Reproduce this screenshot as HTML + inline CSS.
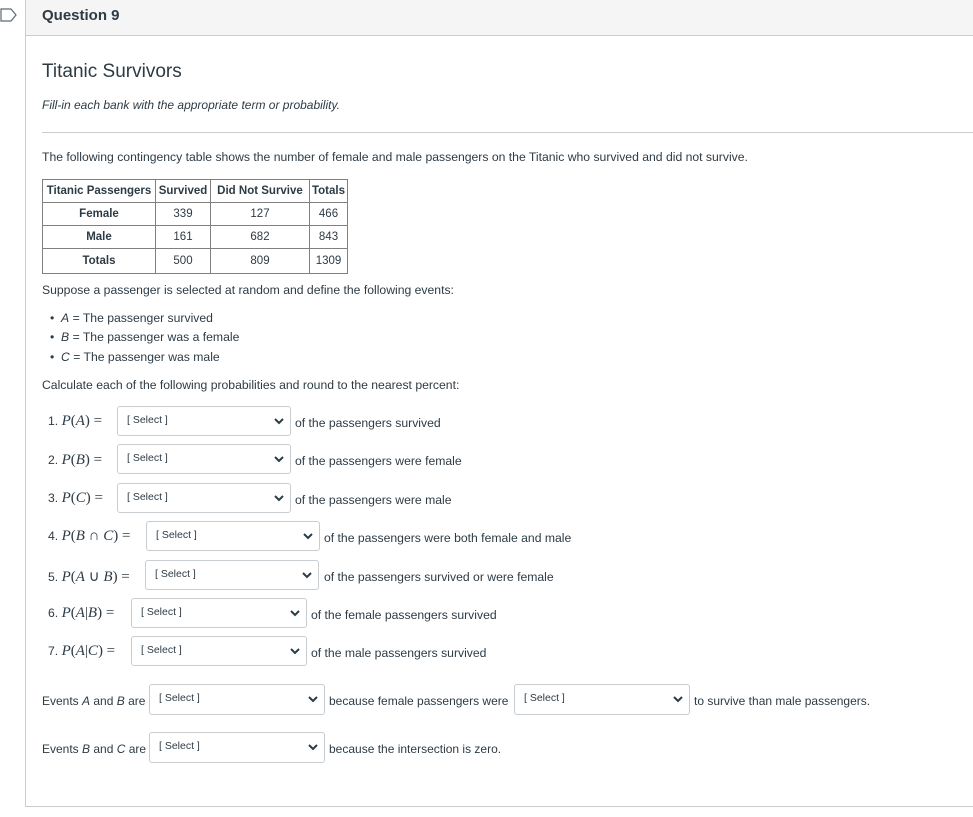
<!DOCTYPE html>
<html><head><meta charset="utf-8"><style>
*{margin:0;padding:0;box-sizing:border-box}
body{width:973px;height:817px;background:#fff;font-family:"Liberation Sans",sans-serif;color:#2d3b45;font-size:12.2px;position:relative;overflow:hidden}
.a{position:absolute;white-space:nowrap}
.hdr{position:absolute;left:25px;top:0;width:948px;height:36px;background:#f5f5f5;border-bottom:1px solid #c7cdd1}
.vl{position:absolute;left:25px;top:0;width:1px;height:807px;background:#c7cdd1}
.bl{position:absolute;left:25px;top:806px;width:948px;height:1px;background:#c7cdd1}
table{position:absolute;left:42px;top:179px;border-collapse:collapse;font-size:11.5px;table-layout:fixed;width:305px}
td{border:1px solid #808080;text-align:center;padding:0;height:23px;color:#2d3b45;white-space:nowrap;overflow:hidden}
.sel{position:absolute;height:30px;border:1px solid #c7cdd1;border-radius:3px;background:#fff}
.sel span{position:absolute;left:9px;top:7px;font-size:10.5px;color:#2d3b45}
.sel svg{position:absolute;right:6px;top:10px}
.m{font-family:"Liberation Serif",serif;font-size:15px}
.m i{font-style:italic}
</style></head><body>
<div class="hdr"></div><div class="vl"></div><div class="bl"></div>
<svg class="a" style="left:0;top:8px" width="18" height="14"><path d="M1 1H11L16 7L11 13H1Z" fill="none" stroke="#5a6a78" stroke-width="1.2"/></svg>
<div class="a" style="left:42px;top:7px;font-size:15px;font-weight:bold;color:#2d3b45">Question 9</div>
<div class="a" style="left:42px;top:61px;font-size:19px">Titanic Survivors</div>
<div class="a" style="left:42px;top:98px;font-size:12px;font-style:italic">Fill-in each bank with the appropriate term or probability.</div>
<div class="a" style="left:42px;top:132px;width:931px;height:1px;background:#c7cdd1"></div>
<div class="a" style="left:42px;top:150px">The following contingency table shows the number of female and male passengers on the Titanic who survived and did not survive.</div>
<table>
<colgroup><col style="width:113px"><col style="width:55px"><col style="width:99px"><col style="width:38px"></colgroup>
<tr style="font-weight:bold"><td style="height:22px">Titanic Passengers</td><td>Survived</td><td>Did Not Survive</td><td>Totals</td></tr>
<tr><td style="font-weight:bold">Female</td><td>339</td><td>127</td><td>466</td></tr>
<tr><td style="font-weight:bold">Male</td><td>161</td><td>682</td><td>843</td></tr>
<tr><td style="font-weight:bold;height:25px">Totals</td><td>500</td><td>809</td><td>1309</td></tr>
</table>
<div class="a" style="left:42px;top:283px">Suppose a passenger is selected at random and define the following events:</div>
<div class="a" style="left:50px;top:311px">•&nbsp;&nbsp;<i>A</i> = The passenger survived</div>
<div class="a" style="left:50px;top:330px">•&nbsp;&nbsp;<i>B</i> = The passenger was a female</div>
<div class="a" style="left:50px;top:350px">•&nbsp;&nbsp;<i>C</i> = The passenger was male</div>
<div class="a" style="left:42px;top:378px">Calculate each of the following probabilities and round to the nearest percent:</div>

<div class="a" style="left:48px;top:413px"><span>1. </span><span class="m"><i>P</i>(<i>A</i>) =</span></div>
<div class="sel" style="left:117px;top:406px;width:174px"><span>[ Select ]</span><svg width="10" height="8"><path d="M1 2L5 6L9 2" fill="none" stroke="#2d3b45" stroke-width="2"/></svg></div>
<div class="a" style="left:295px;top:416px">of the passengers survived</div>

<div class="a" style="left:48px;top:452px"><span>2. </span><span class="m"><i>P</i>(<i>B</i>) =</span></div>
<div class="sel" style="left:117px;top:444px;width:174px"><span>[ Select ]</span><svg width="10" height="8"><path d="M1 2L5 6L9 2" fill="none" stroke="#2d3b45" stroke-width="2"/></svg></div>
<div class="a" style="left:295px;top:454px">of the passengers were female</div>

<div class="a" style="left:48px;top:490px"><span>3. </span><span class="m"><i>P</i>(<i>C</i>) =</span></div>
<div class="sel" style="left:117px;top:483px;width:174px"><span>[ Select ]</span><svg width="10" height="8"><path d="M1 2L5 6L9 2" fill="none" stroke="#2d3b45" stroke-width="2"/></svg></div>
<div class="a" style="left:295px;top:493px">of the passengers were male</div>

<div class="a" style="left:48px;top:528px"><span>4. </span><span class="m"><i>P</i>(<i>B</i> ∩ <i>C</i>) =</span></div>
<div class="sel" style="left:146px;top:521px;width:174px"><span>[ Select ]</span><svg width="10" height="8"><path d="M1 2L5 6L9 2" fill="none" stroke="#2d3b45" stroke-width="2"/></svg></div>
<div class="a" style="left:324px;top:531px">of the passengers were both female and male</div>

<div class="a" style="left:48px;top:567px"><span>5. </span><span class="m"><i>P</i>(<i>A</i> ∪ <i>B</i>) =</span></div>
<div class="sel" style="left:145px;top:560px;width:174px"><span>[ Select ]</span><svg width="10" height="8"><path d="M1 2L5 6L9 2" fill="none" stroke="#2d3b45" stroke-width="2"/></svg></div>
<div class="a" style="left:324px;top:570px">of the passengers survived or were female</div>

<div class="a" style="left:48px;top:605px"><span>6. </span><span class="m"><i>P</i>(<i>A</i>|<i>B</i>) =</span></div>
<div class="sel" style="left:131px;top:598px;width:176px"><span>[ Select ]</span><svg width="10" height="8"><path d="M1 2L5 6L9 2" fill="none" stroke="#2d3b45" stroke-width="2"/></svg></div>
<div class="a" style="left:311px;top:608px">of the female passengers survived</div>

<div class="a" style="left:48px;top:643px"><span>7. </span><span class="m"><i>P</i>(<i>A</i>|<i>C</i>) =</span></div>
<div class="sel" style="left:131px;top:636px;width:176px"><span>[ Select ]</span><svg width="10" height="8"><path d="M1 2L5 6L9 2" fill="none" stroke="#2d3b45" stroke-width="2"/></svg></div>
<div class="a" style="left:311px;top:646px">of the male passengers survived</div>

<div class="a" style="left:42px;top:694px;font-size:12px">Events <i>A</i> and <i>B</i> are</div>
<div class="sel" style="left:149px;top:684px;width:176px;height:31px"><span>[ Select ]</span><svg width="10" height="8"><path d="M1 2L5 6L9 2" fill="none" stroke="#2d3b45" stroke-width="2"/></svg></div>
<div class="a" style="left:329px;top:694px;font-size:12px">because female passengers were</div>
<div class="sel" style="left:514px;top:684px;width:176px;height:31px"><span>[ Select ]</span><svg width="10" height="8"><path d="M1 2L5 6L9 2" fill="none" stroke="#2d3b45" stroke-width="2"/></svg></div>
<div class="a" style="left:694px;top:694px;font-size:12px">to survive than male passengers.</div>

<div class="a" style="left:42px;top:742px;font-size:12px">Events <i>B</i> and <i>C</i> are</div>
<div class="sel" style="left:149px;top:732px;width:176px;height:31px"><span>[ Select ]</span><svg width="10" height="8"><path d="M1 2L5 6L9 2" fill="none" stroke="#2d3b45" stroke-width="2"/></svg></div>
<div class="a" style="left:329px;top:742px;font-size:12px">because the intersection is zero.</div>
</body></html>
